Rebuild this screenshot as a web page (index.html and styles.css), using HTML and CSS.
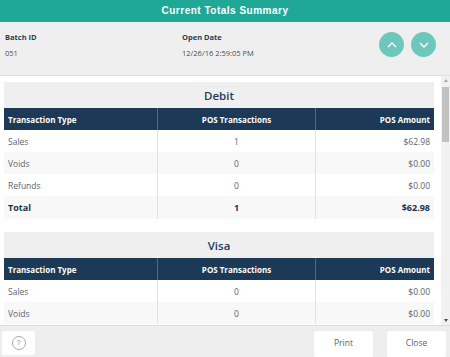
FILE: index.html
```html
<!DOCTYPE html>
<html lang="en">
<head>
    <meta charset="UTF-8">
    <meta name="viewport" content="width=device-width, initial-scale=1.0">
    <title>Current Totals Summary</title>
    <link rel="stylesheet" href="styles.css">
</head>
<body>
    <div class="app">
        <div class="title-bar">Current Totals Summary</div>

        <div class="batch-info">
            <div class="info-col">
                <div class="info-label">Batch ID</div>
                <div class="info-value">051</div>
            </div>
            <div class="info-col info-date">
                <div class="info-label">Open Date</div>
                <div class="info-value">12/26/16 2:59:05 PM</div>
            </div>
            <div class="nav-btns">
                <button class="round-btn" aria-label="Previous">
                    <svg width="10" height="6" viewBox="0 0 10 6"><polyline points="1,5 5,1 9,5" fill="none" stroke="#fff" stroke-width="1.4"/></svg>
                </button>
                <button class="round-btn" aria-label="Next">
                    <svg width="10" height="6" viewBox="0 0 10 6"><polyline points="1,1 5,5 9,1" fill="none" stroke="#fff" stroke-width="1.4"/></svg>
                </button>
            </div>
        </div>

        <div class="main">
            <div class="content">
                <div class="card-type">
                    <div class="card-title">Debit</div>
                    <table class="totals">
                        <tr class="head">
                            <th class="col-type">Transaction Type</th>
                            <th class="col-count">POS Transactions</th>
                            <th class="col-amount">POS Amount</th>
                        </tr>
                        <tr><td>Sales</td><td class="col-count">1</td><td class="col-amount">$62.98</td></tr>
                        <tr><td>Voids</td><td class="col-count">0</td><td class="col-amount">$0.00</td></tr>
                        <tr><td>Refunds</td><td class="col-count">0</td><td class="col-amount">$0.00</td></tr>
                        <tr class="total"><td>Total</td><td class="col-count">1</td><td class="col-amount">$62.98</td></tr>
                    </table>
                </div>

                <div class="card-type">
                    <div class="card-title">Visa</div>
                    <table class="totals">
                        <tr class="head">
                            <th class="col-type">Transaction Type</th>
                            <th class="col-count">POS Transactions</th>
                            <th class="col-amount">POS Amount</th>
                        </tr>
                        <tr><td>Sales</td><td class="col-count">0</td><td class="col-amount">$0.00</td></tr>
                        <tr><td>Voids</td><td class="col-count">0</td><td class="col-amount">$0.00</td></tr>
                    </table>
                </div>
            </div>
            <div class="scrollbar">
                <div class="arrow-up"></div>
                <div class="track"><div class="thumb"></div></div>
                <div class="arrow-down"></div>
            </div>
        </div>

        <div class="footer">
            <button class="help-btn" aria-label="Help"><span class="help-icon">?</span></button>
            <div class="footer-actions">
                <button class="foot-btn">Print</button>
                <button class="foot-btn">Close</button>
            </div>
        </div>
    </div>
</body>
</html>
```

FILE: styles.css
```css
body {
    margin: 0;
    font-family: "Open Sans", Lato, sans-serif;
    background-color: #fff;
}
.app {
    width: 450px;
    height: 357px;
    display: flex;
    flex-direction: column;
    overflow: hidden;
}
.title-bar {
    height: 22px;
    line-height: 22px;
    background-color: #1fa896;
    color: #fff;
    text-align: center;
    font-family: "Liberation Sans", Arial, sans-serif;
    font-weight: bold;
    font-size: 10px;
    letter-spacing: 0.5px;
}
.batch-info {
    height: 53px;
    background-color: #efefef;
    border-bottom: 1px solid #e0e0e0;
    display: flex;
    padding: 0 14px 0 5px;
}
.info-col {
    width: 177px;
    padding-top: 10px;
}
.info-label {
    font-size: 7.5px;
    font-weight: bold;
    color: #2c3d52;
}
.info-value {
    font-size: 7.5px;
    color: #3f4f63;
    margin-top: 6px;
}
.nav-btns {
    margin-left: auto;
    display: flex;
    gap: 7px;
    padding-top: 10px;
}
.round-btn {
    width: 25px;
    height: 25px;
    border-radius: 50%;
    border: none;
    padding: 0;
    background-color: #6dc7ba;
    display: flex;
    align-items: center;
    justify-content: center;
}
.main {
    flex: 1;
    display: flex;
    min-height: 0;
}
.content {
    flex: 1;
    overflow: hidden;
    padding: 6px 7px 0 4px;
}
.card-type {
    margin-bottom: 13px;
}
.card-title {
    height: 26px;
    line-height: 27px;
    background-color: #efefef;
    text-align: center;
    font-size: 11.5px;
    font-weight: 600;
    color: #1f3a58;
}
.totals {
    width: 100%;
    border-collapse: collapse;
    font-size: 8.5px;
    color: #5a6470;
}
.totals th,
.totals td {
    height: 22px;
    padding: 0 4px;
    border-left: 1px solid #e2e2e2;
}
.totals th:first-child,
.totals td:first-child {
    border-left: none;
}
.totals .head th {
    background-color: #1c3a58;
    color: #fff;
    font-size: 8px;
    font-weight: bold;
    border-left-color: #506a84;
}
.totals tr:nth-child(odd) td {
    background-color: #f8f8f8;
}
.totals .total td {
    font-weight: bold;
    color: #1f3146;
    height: 23px;
    font-size: 9px;
}
.col-type {
    width: 145px;
    text-align: left;
}
.col-count {
    width: 149px;
    text-align: center;
}
.col-amount {
    text-align: right;
}
.scrollbar {
    width: 9px;
    background-color: #f1f1f1;
    display: flex;
    flex-direction: column;
    align-items: center;
}
.arrow-up,
.arrow-down {
    height: 9px;
    width: 9px;
    display: flex;
    justify-content: center;
    align-items: center;
}
.arrow-up::before {
    content: "";
    border-left: 2.5px solid transparent;
    border-right: 2.5px solid transparent;
    border-bottom: 3px solid #a3a3a3;
}
.arrow-down::before {
    content: "";
    border-left: 2.5px solid transparent;
    border-right: 2.5px solid transparent;
    border-top: 3px solid #505050;
}
.track {
    flex: 1;
    width: 100%;
}
.thumb {
    width: 7px;
    margin: 2px auto 0;
    height: 55px;
    background-color: #c1c1c1;
}
.footer {
    height: 31px;
    border-top: 1px solid #dcdcdc;
    background-color: #eeeeee;
    display: flex;
    align-items: flex-start;
    padding: 5px 4px 0 2px;
    box-sizing: border-box;
    height: 32px;
}
.help-btn {
    width: 33px;
    height: 24px;
    background-color: #fff;
    border: none;
    border-radius: 2px;
    padding: 0;
    display: flex;
    align-items: center;
    justify-content: center;
}
.help-icon {
    width: 12px;
    height: 12px;
    border: 1px solid #aaa;
    border-radius: 50%;
    font-size: 8px;
    line-height: 12px;
    text-align: center;
    color: #999;
}
.footer-actions {
    margin-left: auto;
    display: flex;
    gap: 14px;
}
.foot-btn {
    width: 59px;
    height: 26px;
    background-color: #fff;
    border: none;
    border-radius: 2px;
    padding: 0 0 4px;
    font-family: "Open Sans", Lato, sans-serif;
    font-size: 8.5px;
    color: #5a6470;
}
```
